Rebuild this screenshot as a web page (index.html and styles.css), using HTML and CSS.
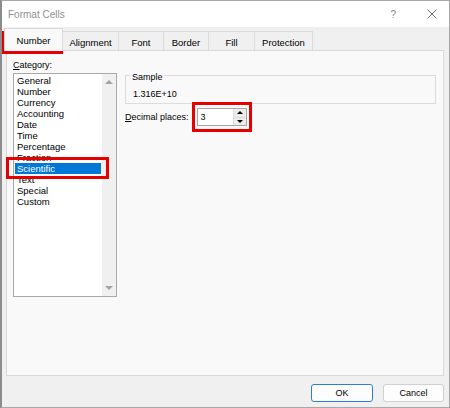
FILE: index.html
```html
<!DOCTYPE html>
<html lang="en">
<head>
<meta charset="utf-8">
<title>Format Cells</title>
<link rel="stylesheet" href="styles.css">
</head>
<body>
<div class="dialog">
  <div class="titlebar">
    <span class="title">Format Cells</span>
    <span class="help">?</span>
    <span class="close"><svg width="10" height="10" viewBox="0 0 10 10"><path d="M0.5 0.5L9.5 9.5M9.5 0.5L0.5 9.5" stroke="#6a6a6a" stroke-width="1" fill="none"/></svg></span>
  </div>
  <div class="tabs">
    <div class="tab tab-number active">Number</div>
    <div class="tab tab-alignment">Alignment</div>
    <div class="tab tab-font">Font</div>
    <div class="tab tab-border">Border</div>
    <div class="tab tab-fill">Fill</div>
    <div class="tab tab-protection">Protection</div>
  </div>
  <div class="panel">
    <div class="category">
      <div class="field-label"><u>C</u>ategory:</div>
      <div class="listbox">
        <ul class="items">
          <li>General</li>
          <li>Number</li>
          <li>Currency</li>
          <li>Accounting</li>
          <li>Date</li>
          <li>Time</li>
          <li>Percentage</li>
          <li>Fraction</li>
          <li class="selected">Scientific</li>
          <li>Text</li>
          <li>Special</li>
          <li>Custom</li>
        </ul>
        <div class="scrollbar">
          <span class="arrow arrow-up"></span>
          <span class="arrow arrow-down"></span>
        </div>
      </div>
    </div>
    <div class="details">
      <div class="sample">
        <div class="sample-title">Sample</div>
        <div class="sample-value">1.316E+10</div>
      </div>
      <div class="decimal-row">
        <span class="field-label"><u>D</u>ecimal places:</span>
        <div class="spin">
          <span class="spin-value">3</span>
          <div class="spin-buttons">
            <span class="spin-btn"><span class="tri tri-up"></span></span>
            <span class="spin-btn"><span class="tri tri-down"></span></span>
          </div>
        </div>
      </div>
    </div>
  </div>
  <div class="footer">
    <button class="btn btn-default">OK</button>
    <button class="btn">Cancel</button>
  </div>
  <div class="mark mark-tab"></div>
  <div class="mark mark-item"></div>
  <div class="mark mark-spin"></div>
</div>
</body>
</html>
```
FILE: styles.css
```css
html, body {
  margin: 0;
  padding: 0;
  background: #ffffff;
}

.dialog {
  position: relative;
  width: 450px;
  height: 408px;
  box-sizing: border-box;
  border: 1px solid #a8a8a8;
  border-left: 2px solid #8c8c8c;
  background: #f0f0f0;
  display: flex;
  flex-direction: column;
  font-family: "Liberation Sans", Arial, sans-serif;
  font-size: 9px;
  color: #000;
}

/* title bar */
.titlebar {
  flex: none;
  height: 26px;
  background: #ffffff;
  display: flex;
  align-items: center;
}
.title {
  margin-left: 6px;
  font-size: 10px;
  color: #8f8f8f;
}
.help {
  margin-left: auto;
  font-size: 10px;
  color: #8a8a8a;
}
.close {
  margin-left: 31px;
  margin-right: 12px;
  display: flex;
}

/* tabs */
.tabs {
  flex: none;
  display: flex;
  height: 19px;
  margin-top: 4px;
  padding-left: 3px;
  position: relative;
  z-index: 1;
}
.tab {
  box-sizing: border-box;
  height: 19px;
  margin-left: -1px;
  border: 1px solid #dadada;
  border-bottom: none;
  background: #f0f0f0;
  display: flex;
  align-items: center;
  justify-content: center;
  padding-top: 2px;
  font-size: 9.5px;
}
.tab.active {
  align-self: flex-start;
  height: 23px;
  margin-top: -3px;
  background: #f9f9f9;
  padding-top: 0;
}
.tab-number { width: 59px; }
.tab-alignment { width: 57px; }
.tab-font { width: 46px; }
.tab-border { width: 46px; }
.tab-fill { width: 47px; }
.tab-protection { width: 59px; }

/* panel */
.panel {
  flex: none;
  height: 326px;
  box-sizing: border-box;
  margin: 0 5px 0 4px;
  border: 1px solid #d9d9d9;
  background: #f9f9f9;
  display: flex;
  gap: 8px;
  padding: 9px 7px 0 6px;
}

.field-label {
  line-height: 11px;
}
.field-label u {
  text-decoration-thickness: 1px;
  text-underline-offset: 1px;
}

.category {
  flex: none;
  display: flex;
  flex-direction: column;
  gap: 2px;
}
.listbox {
  box-sizing: border-box;
  width: 104px;
  height: 224px;
  border: 1px solid #a9a9a9;
  background: #ffffff;
  display: flex;
}
.items {
  list-style: none;
  margin: 0;
  padding: 1px 0 0 0;
  flex: 1;
}
.items li {
  height: 11px;
  line-height: 11px;
  margin: 0 1px;
  padding-left: 2px;
  white-space: nowrap;
  font-size: 9.5px;
}
.items li.selected {
  background: #0078d7;
  color: #ffffff;
}
.scrollbar {
  width: 14px;
  background: #f0f0f0;
  display: flex;
  flex-direction: column;
  justify-content: space-between;
  align-items: center;
  padding: 6px 0 6px;
}
.arrow {
  width: 0;
  height: 0;
  border-left: 4px solid transparent;
  border-right: 4px solid transparent;
}
.arrow-up { border-bottom: 4px solid #a3a3a3; }
.arrow-down { border-top: 4px solid #a3a3a3; }

/* right column */
.details {
  flex: 1;
  display: flex;
  flex-direction: column;
}
.sample {
  box-sizing: border-box;
  height: 29px;
  margin-top: 15px;
  border: 1px solid #dcdcdc;
  padding-left: 5px;
}
.sample-title {
  width: fit-content;
  margin-top: -4px;
  padding: 0 1px;
  background: #f9f9f9;
  line-height: 11px;
}
.sample-value {
  margin: 6px 0 0 2px;
  line-height: 11px;
}

.decimal-row {
  display: flex;
  align-items: center;
  margin-top: 4px;
}
.spin {
  box-sizing: border-box;
  display: flex;
  width: 50px;
  height: 18px;
  margin-left: 8px;
  border: 1px solid #a6a6a6;
  background: #ffffff;
}
.spin-value {
  flex: 1;
  padding-left: 3px;
  display: flex;
  align-items: center;
}
.spin-buttons {
  width: 12px;
  display: flex;
  flex-direction: column;
  background: #ececec;
  border-left: 1px solid #dcdcdc;
}
.spin-btn {
  flex: 1;
  display: flex;
  align-items: center;
  justify-content: center;
}
.spin-btn + .spin-btn {
  border-top: 1px solid #dcdcdc;
}
.tri {
  width: 0;
  height: 0;
  border-left: 3px solid transparent;
  border-right: 3px solid transparent;
}
.tri-up { border-bottom: 3px solid #000; }
.tri-down { border-top: 3px solid #000; }

/* footer */
.footer {
  flex: none;
  display: flex;
  justify-content: flex-end;
  gap: 10px;
  padding: 8px 5px 0 0;
}
.btn {
  box-sizing: border-box;
  width: 61px;
  height: 18px;
  padding: 0;
  border: 1px solid #d0d0d0;
  border-radius: 3px;
  background: #fdfdfd;
  font-family: "Liberation Sans", Arial, sans-serif;
  font-size: 9px;
  color: #000;
}
.btn-default {
  width: 62px;
  border-color: #2f7fd0;
}

/* red annotation boxes */
.mark {
  position: absolute;
  box-sizing: border-box;
  border: 3px solid #e60000;
  pointer-events: none;
}
.mark-tab {
  left: 0px;
  top: 30px;
  width: 61px;
  height: 23px;
}
.mark-item {
  left: 4px;
  top: 156px;
  width: 103px;
  height: 22px;
}
.mark-spin {
  left: 190px;
  top: 101px;
  width: 60px;
  height: 30px;
}
```
